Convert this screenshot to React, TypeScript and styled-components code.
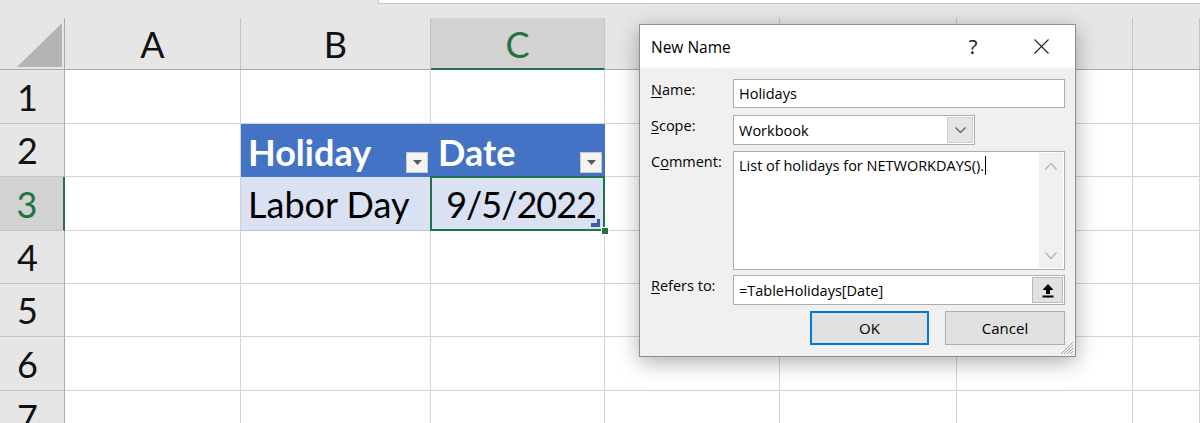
import styled, { createGlobalStyle } from 'styled-components';

const GlobalStyle = createGlobalStyle`
  html, body { margin: 0; padding: 0; background: #fff; overflow: hidden; }
  body { font-family: Lato, "Liberation Sans", sans-serif; }
  * { box-sizing: border-box; }
`;

const GREEN = '#217346';

const Page = styled.div`
  position: relative;
  width: 1200px;
  height: 423px;
  overflow: hidden;
  display: flex;
  flex-direction: column;
`;

const TopStrip = styled.div`
  height: 18px;
  flex-shrink: 0;
  background: #e6e6e6;
  display: flex;
  align-items: flex-start;
`;

const FormulaEdge = styled.div`
  margin-left: 378px;
  flex: 1;
  height: 4px;
  background: #fff;
  border-left: 1px solid #c8c8c8;
  border-bottom: 1px solid #c8c8c8;
`;

const Sheet = styled.div`
  display: grid;
  grid-template-columns: 65px 176px 190px 174px 175px 177px 176px 1fr;
  grid-template-rows: 52px 54px 53px 54px 53px 53px 54px 53px;
  font-size: 36px;
  color: #000;
`;

const Corner = styled.div`
  background: #e6e6e6;
  border-bottom: 1px solid #ababab;
  border-right: 1px solid #ababab;
  display: flex;
  align-items: flex-end;
  justify-content: flex-end;
  padding: 0 2px 2px 0;
`;

const ColHead = styled.div<{ $selected?: boolean }>`
  background: ${(p) => (p.$selected ? '#d2d2d2' : '#e6e6e6')};
  color: ${(p) => (p.$selected ? GREEN : '#111')};
  border-right: 1px solid #c4c4c4;
  border-bottom: ${(p) => (p.$selected ? `2px solid ${GREEN}` : '1px solid #ababab')};
  display: flex;
  align-items: center;
  justify-content: center;
  padding-top: ${(p) => (p.$selected ? '1px' : '0')};
`;

const RowHead = styled.div<{ $selected?: boolean }>`
  background: ${(p) => (p.$selected ? '#d2d2d2' : '#e6e6e6')};
  color: ${(p) => (p.$selected ? GREEN : '#111')};
  border-right: ${(p) => (p.$selected ? `2px solid ${GREEN}` : '1px solid #ababab')};
  border-bottom: 1px solid #c4c4c4;
  display: flex;
  align-items: center;
  justify-content: center;
  padding-right: 9px;
  overflow: hidden;
`;

type Kind = 'plain' | 'head' | 'band';

const Cell = styled.div<{ $kind?: Kind; $align?: 'left' | 'right'; $active?: boolean }>`
  position: relative;
  z-index: ${(p) => (p.$active ? 2 : 0)};
  display: flex;
  align-items: center;
  justify-content: ${(p) => (p.$align === 'right' ? 'flex-end' : 'flex-start')};
  padding: ${(p) => (p.$kind === 'head' ? '3px 0 0 7px' : '0 8px 0 7px')};
  white-space: nowrap;
  background: ${(p) => (p.$kind === 'head' ? '#4472c4' : p.$kind === 'band' ? '#d9e1f2' : '#fff')};
  color: ${(p) => (p.$kind === 'head' ? '#fff' : '#000')};
  font-weight: ${(p) => (p.$kind === 'head' ? 700 : 400)};
  border-right: 1px solid ${(p) => (p.$kind === 'head' ? '#4472c4' : p.$kind === 'band' ? '#d9e1f2' : '#d4d4d4')};
  border-bottom: 1px solid ${(p) => (p.$kind === 'band' ? '#b4c6e7' : p.$kind === 'head' ? '#4472c4' : '#d4d4d4')};

  ${(p) =>
    p.$active &&
    `
    &::after {
      content: '';
      position: absolute;
      left: -1px;
      top: -1px;
      right: -1px;
      bottom: -1px;
      border: 2px solid ${GREEN};
      pointer-events: none;
    }
  `}
`;

const HeadText = styled.span`
  flex: 1;
`;

const DateText = styled.span`
  letter-spacing: -1px;
`;

const FilterBtn = styled.div`
  align-self: flex-end;
  width: 22px;
  height: 21px;
  margin: 0 2px 3px 0;
  background: #f4f4f4;
  border: 1px solid #c9c9c9;
  display: flex;
  align-items: center;
  justify-content: center;
`;

const FillHandle = styled.div`
  position: absolute;
  right: -5px;
  bottom: -5px;
  width: 8px;
  height: 8px;
  background: ${GREEN};
  border: 1px solid #fff;
  z-index: 3;
`;

const ResizeMark = styled.div`
  position: absolute;
  right: 4px;
  bottom: 3px;
  width: 9px;
  height: 8px;
  border-right: 3px solid #4259b0;
  border-bottom: 4px solid #4259b0;
  z-index: 3;
`;

/* ---------- dialog ---------- */

const Dialog = styled.div`
  position: absolute;
  left: 639px;
  top: 24px;
  width: 437px;
  height: 333px;
  background: #f0f0f0;
  border: 1px solid #8f8f8f;
  box-shadow: 0 5px 20px rgba(0, 0, 0, 0.32);
  display: flex;
  flex-direction: column;
  font-family: "Open Sans", "Noto Sans", "Liberation Sans", sans-serif;
  font-size: 14.5px;
  color: #000;
  z-index: 10;
`;

const TitleBar = styled.div`
  height: 43px;
  flex-shrink: 0;
  background: #fff;
  display: flex;
  align-items: center;
  padding-left: 11px;
  font-size: 15.5px;
`;

const Title = styled.span`
  margin-right: auto;
`;

const TitleBtn = styled.div<{ $close?: boolean }>`
  width: 40px;
  height: 30px;
  margin: ${(p) => (p.$close ? '0 14px 0 28px' : '0')};
  display: flex;
  align-items: center;
  justify-content: center;
  font-family: "Noto Sans", "Open Sans", sans-serif;
  font-size: 20px;
  color: #1a1a1a;
`;

const Body = styled.div`
  flex: 1;
  padding: 11px 10px 0 11px;
  display: flex;
  flex-direction: column;
`;

const Field = styled.div<{ $gap?: number }>`
  display: flex;
  align-items: flex-start;
  margin-top: ${(p) => p.$gap ?? 0}px;
`;

const Label = styled.div`
  width: 82px;
  flex-shrink: 0;
  line-height: 22px;
`;

const Key = styled.span`
  text-decoration: underline;
  text-underline-offset: 2px;
  text-decoration-thickness: 1px;
`;

const TextBox = styled.div<{ $w?: number; $h: number }>`
  width: ${(p) => (p.$w ? `${p.$w}px` : 'auto')};
  flex: ${(p) => (p.$w ? '0 0 auto' : '1')};
  height: ${(p) => p.$h}px;
  background: #fff;
  border: 1px solid #adadad;
  display: flex;
  align-items: stretch;
`;

const Value = styled.div<{ $top?: boolean }>`
  flex: 1;
  display: flex;
  align-items: ${(p) => (p.$top ? 'flex-start' : 'center')};
  padding: ${(p) => (p.$top ? '4px 0 0 5px' : '0 0 0 5px')};
  white-space: nowrap;
`;

const Caret = styled.span`
  display: inline-block;
  width: 1px;
  height: 19px;
  background: #000;
  margin-left: 1px;
`;

const DropBtn = styled.div`
  width: 26px;
  margin: 1px;
  background: #e5e5e5;
  border: 1px solid #cfcfcf;
  display: flex;
  align-items: center;
  justify-content: center;
`;

const ScrollBar = styled.div`
  width: 24px;
  margin: 1px;
  background: #f0f0f0;
  display: flex;
  flex-direction: column;
  justify-content: space-between;
  align-items: center;
  padding: 10px 0 9px;
`;

const CollapseBtn = styled.div`
  width: 31px;
  margin: 1px;
  background: #e1e1e1;
  border: 1px solid #b9b9b9;
  display: flex;
  align-items: center;
  justify-content: center;
`;

const ButtonRow = styled.div`
  display: flex;
  justify-content: flex-end;
  gap: 16px;
  margin-top: 6px;
`;

const Button = styled.div<{ $primary?: boolean }>`
  width: ${(p) => (p.$primary ? 119 : 120)}px;
  height: 34px;
  background: #e1e1e1;
  border: ${(p) => (p.$primary ? '2px solid #0078d7' : '1px solid #adadad')};
  display: flex;
  align-items: center;
  justify-content: center;
  font-size: 15px;
`;

const Grip = styled.svg`
  position: absolute;
  right: 1px;
  bottom: 1px;
`;

const columns = ['A', 'B', 'C', 'D', 'E', 'F', ''];

function Triangle({ color = '#5a5a5a' }: { color?: string }) {
  return (
    <svg width="9" height="5" viewBox="0 0 9 5">
      <path d="M0 0 H9 L4.5 5 Z" fill={color} />
    </svg>
  );
}

function Chevron({ up, color, w = 12, h = 7 }: { up?: boolean; color: string; w?: number; h?: number }) {
  return (
    <svg width={w} height={h} viewBox={`0 0 ${w} ${h}`}>
      <polyline
        points={up ? `0.5,${h - 0.5} ${w / 2},0.5 ${w - 0.5},${h - 0.5}` : `0.5,0.5 ${w / 2},${h - 0.5} ${w - 0.5},0.5`}
        fill="none"
        stroke={color}
        strokeWidth="1.3"
      />
    </svg>
  );
}

function EmptyRow({ n, selected }: { n: number; selected?: boolean }) {
  return (
    <>
      <RowHead $selected={selected}>{n}</RowHead>
      {columns.map((c, i) => (
        <Cell key={i} />
      ))}
    </>
  );
}

export default function App() {
  return (
    <Page>
      <GlobalStyle />
      <TopStrip>
        <FormulaEdge />
      </TopStrip>
      <Sheet>
        <Corner>
          <svg width="45" height="44" viewBox="0 0 45 44">
            <path d="M0 44 L45 44 L45 0 Z" fill="#b4b4b4" />
          </svg>
        </Corner>
        {columns.map((c, i) => (
          <ColHead key={i} $selected={c === 'C'}>
            {c}
          </ColHead>
        ))}

        <EmptyRow n={1} />

        <RowHead>2</RowHead>
        <Cell />
        <Cell $kind="head">
          <HeadText>Holiday</HeadText>
          <FilterBtn>
            <Triangle />
          </FilterBtn>
        </Cell>
        <Cell $kind="head">
          <HeadText>Date</HeadText>
          <FilterBtn>
            <Triangle />
          </FilterBtn>
        </Cell>
        <Cell />
        <Cell />
        <Cell />
        <Cell />

        <RowHead $selected>3</RowHead>
        <Cell />
        <Cell $kind="band">Labor Day</Cell>
        <Cell $kind="band" $align="right" $active>
          <DateText>9/5/2022</DateText>
          <ResizeMark />
          <FillHandle />
        </Cell>
        <Cell />
        <Cell />
        <Cell />
        <Cell />

        <EmptyRow n={4} />
        <EmptyRow n={5} />
        <EmptyRow n={6} />
        <EmptyRow n={7} />
      </Sheet>

      <Dialog>
        <TitleBar>
          <Title>New Name</Title>
          <TitleBtn>?</TitleBtn>
          <TitleBtn $close>
            <svg width="15" height="15" viewBox="0 0 15 15">
              <path d="M0.5 0.5 L14.5 14.5 M14.5 0.5 L0.5 14.5" stroke="#222" strokeWidth="1.1" />
            </svg>
          </TitleBtn>
        </TitleBar>
        <Body>
          <Field>
            <Label>
              <Key>N</Key>ame:
            </Label>
            <TextBox $h={29}>
              <Value>Holidays</Value>
            </TextBox>
          </Field>
          <Field $gap={7}>
            <Label>
              <Key>S</Key>cope:
            </Label>
            <TextBox $w={242} $h={30}>
              <Value>Workbook</Value>
              <DropBtn>
                <Chevron color="#606060" w={11} h={6} />
              </DropBtn>
            </TextBox>
          </Field>
          <Field $gap={6}>
            <Label>
              C<Key>o</Key>mment:
            </Label>
            <TextBox $h={119}>
              <Value $top>
                List of holidays for NETWORKDAYS().
                <Caret />
              </Value>
              <ScrollBar>
                <Chevron up color="#b3b3b3" />
                <Chevron color="#b3b3b3" />
              </ScrollBar>
            </TextBox>
          </Field>
          <Field $gap={5}>
            <Label>
              <Key>R</Key>efers to:
            </Label>
            <TextBox $h={30}>
              <Value>=TableHolidays[Date]</Value>
              <CollapseBtn>
                <svg width="12" height="15" viewBox="0 0 12 15">
                  <path d="M6 1 L11.5 7 H8 V11 H4 V7 H0.5 Z" fill="#000" />
                  <rect x="0.5" y="12.5" width="11" height="2" fill="#000" />
                </svg>
              </CollapseBtn>
            </TextBox>
          </Field>
          <ButtonRow>
            <Button $primary>OK</Button>
            <Button>Cancel</Button>
          </ButtonRow>
        </Body>
        <Grip width="13" height="13" viewBox="0 0 13 13">
          <path d="M12 3 L3 12 M12 6 L6 12 M12 9 L9 12 M12 0 L0 12" stroke="#a8a8a8" strokeWidth="1" />
        </Grip>
      </Dialog>
    </Page>
  );
}
